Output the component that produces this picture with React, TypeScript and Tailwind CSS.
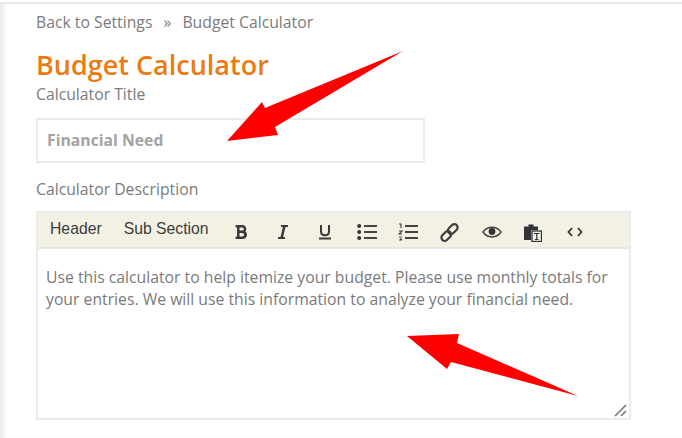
import { FaBold, FaItalic } from 'react-icons/fa';

const iconButtons = [
	{ key: 'bold', icon: <FaBold size={16} /> },
	{ key: 'italic', icon: <FaItalic size={16} /> },
	{
		key: 'underline',
		icon: (
			<svg width="14" height="16" viewBox="0 0 14 16" fill="none" stroke="#3a3a3a">
				<path d="M3 1v6.500c0 5 8 5 8 0V1" strokeWidth="2" />
				<path d="M1 14.500h12" strokeWidth="2" />
			</svg>
		),
	},
	{
		key: 'ul',
		icon: (
			<svg width="20" height="18" viewBox="0 0 20 18" fill="#333" stroke="#444" strokeWidth="2">
				<circle cx="2.200" cy="3" r="2" stroke="none" />
				<circle cx="2.200" cy="9" r="2" stroke="none" />
				<circle cx="2.200" cy="15" r="2" stroke="none" />
				<path d="M7 3h13M7 9h13M7 15h13" />
			</svg>
		),
	},
	{
		key: 'ol',
		icon: (
			<svg width="20" height="18" viewBox="0 0 20 18" fill="none" stroke="#444">
				<path d="M1 1h2v4M1 8h3l-3 3h3M1 14h3M2 16h2M1 17h3" strokeWidth="1.200" />
				<path d="M7 3h13M7 9h13M7 15h13" strokeWidth="2" />
			</svg>
		),
	},
	{
		key: 'link',
		icon: (
			<svg width="19" height="19" viewBox="0 0 19 19" fill="none" stroke="#3e3e3e" strokeWidth="2.200">
				<rect x="9.500" y="0.500" width="6.500" height="11" rx="3.200" transform="rotate(45 12.750 6)" />
				<rect x="3" y="7.500" width="6.500" height="11" rx="3.200" transform="rotate(45 6.250 13)" />
			</svg>
		),
	},
	{
		key: 'eye',
		icon: (
			<svg width="20" height="12" viewBox="0 0 20 12" fill="none" stroke="#444" strokeWidth="1.500">
				<path d="M1 6c4.500-6.500 13.500-6.500 18 0-4.500 6.500-13.500 6.500-18 0Z" />
				<circle cx="10" cy="5.500" r="3.400" fill="#333" stroke="none" />
			</svg>
		),
	},
	{
		key: 'paste',
		icon: (
			<svg width="18" height="19" viewBox="0 0 18 19">
				<path d="M0 3.500h4.500V1.500h5v2H14v3.500H7v10H0Z" fill="#333" />
				<rect x="8" y="8" width="9.500" height="10.500" fill="none" stroke="#333" strokeWidth="1.300" />
				<path d="M10 10.500h5.500M12.750 10.500v6M11 16.500h3.500" fill="none" stroke="#333" strokeWidth="1.200" />
			</svg>
		),
	},
	{
		key: 'code',
		icon: (
			<svg width="16" height="10" viewBox="0 0 16 10" fill="none" stroke="#333" strokeWidth="1.800">
				<path d="M5 1 1.500 5 5 9M11 1l3.500 4L11 9" />
			</svg>
		),
	},
];

const App = () => {
	return (
		<div className="relative h-[438px] w-[682px] overflow-hidden bg-white font-['Open_Sans',sans-serif] text-[15.75px] text-[#7b7b7b]">
			<div className="h-[4px] border-b-2 border-[#e8e8e8]" />
			<div className="h-[434px] pl-[36px] shadow-[inset_6px_0_5px_-2px_#e9eced]">
				<div className="pt-[7px] leading-[22px]">
					Back to Settings <span className="mx-[7px]">»</span> Budget Calculator
				</div>
				<h1 className="mt-[14px] text-[27px] font-semibold leading-[36px] text-[#ec7a12]">Budget Calculator</h1>
				<label className="block leading-[22px]">Calculator Title</label>
				<div className="mt-[13px] flex h-[45px] w-[389px] items-center border-2 border-[#ebebeb] px-[9px] font-bold text-[#a3a3a3]">
					Financial Need
				</div>
				<label className="mt-[15px] block leading-[22px]">Calculator Description</label>
				<div className="mt-[11px] w-[595px] border-2 border-[#ebebeb]">
					<div className="flex h-[36px] items-center border-b-2 border-[#e6e6e6] bg-[#f3f1e4] pl-[12px] font-['Liberation_Sans',sans-serif] text-[#3c3c3c]">
						<span className="pb-[2px]">Header</span>
						<span className="ml-[22px] mr-[12px] pb-[2px]">Sub Section</span>
						{iconButtons.map((b) => (
							<span key={b.key} className="flex w-[41.700px] items-center justify-center pt-[4px] text-[#3a3a3a]">{b.icon}</span>
						))}
					</div>
					<div className="relative h-[169px] px-[8px] pt-[17px] leading-[22px] text-[#7a7a7a]">
						<p>Use this calculator to help itemize your budget. Please use monthly totals for your entries. We will use this information to analyze your financial need.</p>
						<svg className="absolute bottom-[1px] right-[2px]" width="14" height="14" viewBox="0 0 14 14" stroke="#777" strokeWidth="1.600">
							<path d="M2 13 13 2M8 13l5-5" />
						</svg>
					</div>
				</div>
			</div>
			<svg className="absolute left-0 top-0" width="682" height="438" viewBox="0 0 682 438" fill="#ff0000">
				<polygon points="227,141 262,102 265,108 403,51 275,127 278,135" />
				<polygon points="407,336 459,334 457,343 578,396 451,362 447,369" />
			</svg>
		</div>
	);
};

export default App;
